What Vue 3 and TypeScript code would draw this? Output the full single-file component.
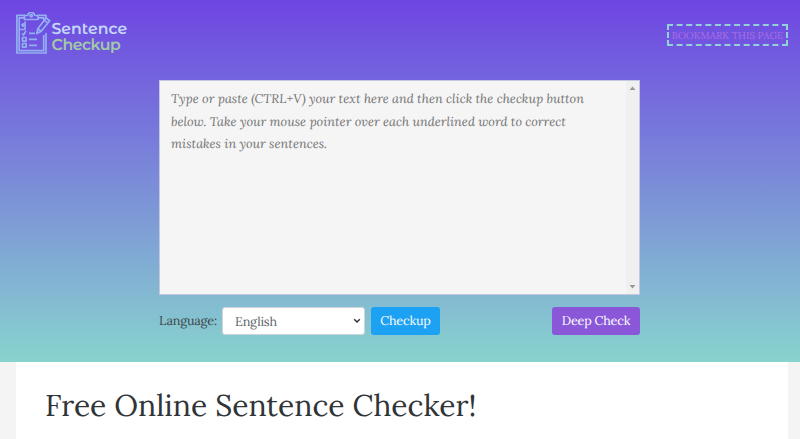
<script setup lang="ts">
import { ref } from 'vue'

const promptLines: string[] = [
  'Type or paste (CTRL+V) your text here and then click the checkup button',
  'below. Take your mouse pointer over each underlined word to correct',
  'mistakes in your sentences.',
]

const languages = ['English', 'German', 'French', 'Spanish']
const language = ref('English')
</script>

<template>
  <div class="page">
    <header class="hero">
      <div class="topbar">
        <svg class="logo" width="112" height="44" viewBox="0 0 112 44" role="img" aria-label="Sentence Checkup">
          <g class="clipboard">
            <path d="M9 3.3H.9V41H30V21M21.5 3.3H30v3" />
            <path d="M9 5.8H3.2V38.7h24.5V23M21.5 5.8h6.2v3" />
            <path d="M8.5 7.5v-4h3.2c.4-4 6.6-4 7 0h3.3v4z" />
            <circle cx="15.2" cy="3.8" r="1.2" />
            <path d="M4 17.5h5V9.5M5 13h4M7 11v4M6 21.5l1.5 1.5 2.5-4" />
            <path d="M20.8 21.5l1-4.7L30 6l3.7 2.7-8.5 10.6zM28.3 8.3l3.6 2.8M21.8 16.8l3.4 2.5" />
            <path d="M13 21.3h6M13 27.3h8M13 33.3h8" />
            <rect x="6.5" y="25.5" width="3.6" height="3.6" />
            <rect x="6.5" y="31.5" width="3.6" height="3.6" />
          </g>
          <text class="word-top" x="35.5" y="21.8">Sentence</text>
          <text class="word-bottom" x="35.5" y="38">Checkup</text>
        </svg>
        <a class="bookmark"><span>BOOKMARK THIS PAGE</span></a>
      </div>

      <main class="checker">
        <div class="editor">
          <div class="prompt">
            <div v-for="line in promptLines" :key="line">{{ line }}</div>
          </div>
          <div class="scrollbar">
            <svg width="7" height="4" viewBox="0 0 7 4"><path d="M.5 4L3.5.5 6.5 4z" /></svg>
            <svg width="7" height="4" viewBox="0 0 7 4"><path d="M.5 0L3.5 3.5 6.5 0z" /></svg>
          </div>
        </div>

        <div class="controls">
          <label for="language">Language:</label>
          <div class="select-wrap">
            <select id="language" v-model="language">
              <option v-for="item in languages" :key="item">{{ item }}</option>
            </select>
            <svg class="chevron" width="8" height="6" viewBox="0 0 8 6"><path d="M1.2 1.2L4 4l2.8-2.8" /></svg>
          </div>
          <button class="btn checkup">Checkup</button>
          <button class="btn deep">Deep Check</button>
        </div>
      </main>
    </header>

    <section class="content">
      <h1>Free Online Sentence Checker!</h1>
    </section>
  </div>
</template>

<style>
body {
  background: #f4f4f4;
  overflow: hidden;
}
</style>

<style scoped>
.page {
  height: 439px;
  overflow: hidden;
  font-family: Lora, "Liberation Serif", serif;
  font-size: 12.64px;
  color: #41454b;
  text-rendering: geometricPrecision;
}

.page * {
  box-sizing: border-box;
}

.hero {
  height: 362px;
  background: linear-gradient(#6e45e2, #88d3ce);
}

.topbar {
  height: 80px;
  padding: 12px 12px 0 16px;
  display: flex;
  justify-content: space-between;
  align-items: flex-start;
}

.logo {
  display: block;
}

.clipboard {
  fill: none;
  stroke: #93b0f2;
  stroke-width: 1.7;
  stroke-linejoin: round;
}

.logo text {
  font-family: "Montserrat Alternates", Montserrat, Lato, sans-serif;
  font-size: 15.7px;
  font-weight: 600;
}

.word-top {
  fill: #c3d6fb;
}

.logo .word-bottom {
  fill: #a1caa6;
  letter-spacing: -0.5px;
}

.bookmark {
  width: 121px;
  height: 22px;
  margin-top: 12px;
  border: 2px dashed #93d1d8;
  color: #ac6ee2;
  font-size: 10px;
  line-height: 19px;
  text-align: center;
  white-space: nowrap;
}

.checker {
  width: 481px;
  margin-left: 159px;
}

.editor {
  height: 215px;
  border: 1px solid #c3c8e0;
  background: #f5f5f5;
  display: flex;
}

.prompt {
  flex: 1;
  min-width: 0;
  padding: 7px 0 0 11px;
  color: #747474;
  font-size: 12.64px;
  font-style: italic;
  line-height: 22.6px;
  white-space: nowrap;
}

.scrollbar {
  width: 13px;
  padding: 5px 0;
  background: #f0f0f0;
  display: flex;
  flex-direction: column;
  justify-content: space-between;
  align-items: center;
}

.scrollbar path {
  fill: #999;
}

.controls {
  height: 28px;
  margin-top: 12px;
  display: flex;
  align-items: center;
  letter-spacing: -0.2px;
}

label {
  width: 63px;
  white-space: nowrap;
}

.select-wrap {
  width: 143px;
  height: 28px;
  margin-right: 6px;
  display: grid;
  align-items: center;
}

.select-wrap > * {
  grid-area: 1 / 1;
}

select {
  width: 100%;
  height: 28px;
  padding: 1px 12px 0;
  border: 1px solid #ced4da;
  border-radius: 3px;
  appearance: none;
  background: #fff;
  color: #5c636a;
  font: inherit;
  letter-spacing: inherit;
  text-rendering: inherit;
}

.chevron {
  justify-self: end;
  margin-right: 4px;
  fill: none;
  stroke: #333;
  stroke-width: 1.5;
  pointer-events: none;
}

.btn {
  height: 28px;
  padding: 0;
  border: 0;
  border-radius: 3px;
  color: #fff;
  font: inherit;
  letter-spacing: inherit;
  text-rendering: inherit;
}

.checkup {
  width: 69px;
  background: #1da1f2;
}

.deep {
  width: 88px;
  margin-left: auto;
  background: #8a57d8;
}

.content {
  height: 77px;
  margin: 0 12px 0 16px;
  padding: 24px 29px;
  background: #fff;
}

h1 {
  margin: 0;
  color: #313437;
  font-size: 30px;
  font-weight: 400;
  line-height: 41px;
  white-space: nowrap;
}
</style>
